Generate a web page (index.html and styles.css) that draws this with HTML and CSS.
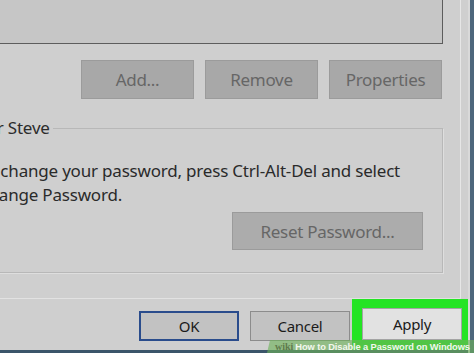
FILE: index.html
```html
<!DOCTYPE html>
<html>
<head>
<meta charset="utf-8">
<link rel="stylesheet" href="styles.css">
</head>
<body>
<div class="screen">
  <div class="dialog">
    <div class="page">
      <div class="listbox"></div>
      <div class="btn-row">
        <button class="btn disabled">Add...</button>
        <button class="btn disabled">Remove</button>
        <button class="btn disabled">Properties</button>
      </div>
      <fieldset class="group">
        <legend class="group-title">for Steve</legend>
        <p class="group-text">To change your password, press Ctrl-Alt-Del and select<br>Change Password.</p>
        <div class="reset-row">
          <button class="btn disabled reset">Reset Password...</button>
        </div>
      </fieldset>
    </div>
    <div class="footer">
      <button class="fbtn ok">OK</button>
      <button class="fbtn cancel">Cancel</button>
      <div class="highlight">
        <button class="fbtn apply">Apply</button>
      </div>
    </div>
    <div class="frame-bottom"></div>
  </div>
  <div class="frame-right"></div>
  <div class="watermark"><span class="wm-wiki">wiki</span><span class="wm-how">How</span> to Disable a Password on Windows</div>
</div>
</body>
</html>
```

FILE: styles.css
```css
html, body {
  margin: 0;
  padding: 0;
}
body {
  width: 474px;
  height: 353px;
  overflow: hidden;
  font-family: "Noto Sans", "Open Sans", sans-serif;
}
.screen {
  position: relative;
  width: 474px;
  height: 353px;
  display: flex;
  overflow: hidden;
  background: #cfcfcf;
}
.dialog {
  width: 470px;
  display: flex;
  flex-direction: column;
}
.frame-right {
  width: 4px;
  background: #4d677c;
  box-shadow: -2px 0 0 #d9d9d9;
}
.frame-bottom {
  height: 3px;
  background: #3b556a;
}
.page {
  box-sizing: border-box;
  width: 461px;
  height: 299px;
  border-right: 1px solid #e6e6e6;
  border-bottom: 1px solid #e2e2e2;
  padding-right: 17px;
  display: flex;
  flex-direction: column;
}
.listbox {
  height: 43px;
  background: #c6c6c6;
  border-right: 1px solid #5d5d5d;
  border-bottom: 1px solid #5d5d5d;
}
.btn-row {
  display: flex;
  justify-content: flex-end;
  gap: 11px;
  margin-top: 16px;
  padding-right: 1px;
}
.btn {
  font-family: inherit;
  box-sizing: border-box;
  width: 113px;
  height: 39px;
  padding: 0;
  margin: 0;
  font-size: 17px;
  letter-spacing: -0.3px;
  background: #a8a8a8;
  border: 1px solid #9b9b9b;
  color: #666666;
}
.group {
  margin: 17px 0 0 -40px;
  padding: 0 19px 22px 17px;
  border: 1px solid #b8b8b8;
  box-shadow: 1px 1px 0 #dedede;
  min-width: 0;
}
.group-title {
  padding: 0 3px;
  font-size: 17px;
  letter-spacing: -0.2px;
  line-height: 24px;
  color: #2c2c2c;
}
.group-text {
  margin: 19px 0 0;
  font-size: 17px;
  letter-spacing: -0.2px;
  line-height: 24px;
  color: #2a2a2a;
  white-space: nowrap;
}
.reset-row {
  display: flex;
  justify-content: flex-end;
  margin-top: 5px;
}
.reset {
  width: 191px;
  height: 38px;
  background: #acacac;
}
.footer {
  flex: 1;
  display: flex;
  justify-content: flex-end;
  align-items: flex-start;
}
.fbtn {
  font-family: inherit;
  box-sizing: border-box;
  width: 100px;
  height: 30px;
  margin: 12px 0 0;
  padding: 0;
  font-size: 15px;
  letter-spacing: -0.3px;
  color: #1b1b1b;
  background: #c2c2c2;
  border: 1px solid #8c8c8c;
}
.ok {
  border: 2px solid #2a4c8c;
}
.cancel {
  margin-left: 11px;
}
.highlight {
  margin-left: 2px;
  align-self: stretch;
  box-sizing: border-box;
  width: 118px;
  padding: 9px 8px 0 10px;
  background: #25e425;
}
.apply {
  margin: 0;
  height: 32px;
  background: #e2e2e2;
  border: 1px solid #a4a4a4;
}
.watermark {
  position: absolute;
  right: 0;
  bottom: 0;
  width: 207px;
  height: 13px;
  padding-left: 8px;
  box-sizing: border-box;
  background: rgba(108, 178, 88, 0.62);
  clip-path: polygon(3px 0, 100% 0, 100% 100%, 0 100%);
  font-family: "Liberation Sans", Arial, sans-serif;
  font-weight: bold;
  font-size: 9.3px;
  letter-spacing: -0.1px;
  line-height: 13px;
  color: #f2f7ee;
  white-space: nowrap;
}
.wm-wiki {
  font-family: "Liberation Serif", serif;
  color: #5f7a4c;
  font-size: 10px;
  letter-spacing: 0;
}
.wm-how {
  margin-left: 2px;
}
```
